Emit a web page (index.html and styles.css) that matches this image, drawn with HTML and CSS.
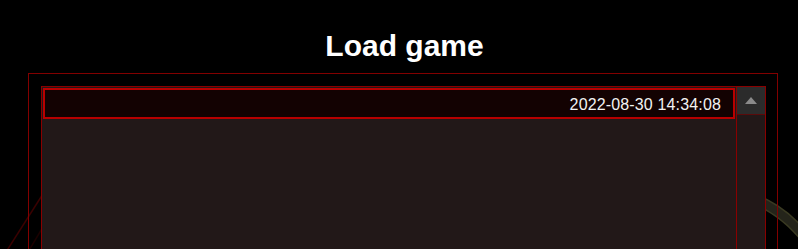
FILE: index.html
```html
<!DOCTYPE html>
<html lang="en">
<head>
<meta charset="utf-8">
<title>Load game</title>
<link rel="stylesheet" href="styles.css">
</head>
<body>
<svg class="backdrop" width="798" height="249" viewBox="0 0 798 249" aria-hidden="true">
  <line x1="6" y1="252" x2="48" y2="186" stroke="#3a0000" stroke-width="1.5"/>
  <line x1="28" y1="252" x2="46" y2="222" stroke="#1c0000" stroke-width="1.5"/>
  <path d="M756 200 Q782 210 804 236" fill="none" stroke="#3a3a22" stroke-width="11"/>
  <path d="M756 200 Q782 210 804 236" fill="none" stroke="#24241a" stroke-width="8"/>
</svg>
<main class="page">
  <h1 class="title">Load game</h1>
  <section class="frame">
    <div class="listbox">
      <div class="list">
        <div class="row">2022-08-30 14:34:08</div>
      </div>
      <div class="scrollbar">
        <div class="scroll-up"><span class="arrow"></span></div>
      </div>
    </div>
  </section>
</main>
</body>
</html>
```

FILE: styles.css
```css
html, body {
  margin: 0;
  padding: 0;
  background: #000;
  height: 249px;
  overflow: hidden;
}

body {
  font-family: "Liberation Sans", Arial, sans-serif;
  color: #fff;
  position: relative;
}

.backdrop {
  position: absolute;
  left: 0;
  top: 0;
  z-index: 0;
}

.page {
  position: relative;
  z-index: 1;
  padding: 29px 0 0 28px;
  width: 750px;
}

.title {
  margin: 0 0 10px;
  padding-left: 3px;
  font-size: 30px;
  line-height: 34px;
  font-weight: bold;
  text-align: center;
  color: #fff;
}

.frame {
  border: 1px solid #820000;
  border-bottom: none;
  padding: 12px 11px 0 12px;
}

.listbox {
  display: flex;
  border: 1px solid #8a0000;
  border-bottom: none;
  background: #221818;
  height: 163px;
}

.list {
  flex: 1;
  padding: 1px 1px 0 1px;
}

.row {
  border: 2px solid #b80000;
  background: #130202;
  padding: 6px 12px 3px;
  line-height: 18px;
  font-size: 16px;
  text-align: right;
  color: #f2f2f2;
  letter-spacing: 0.15px;
}

.scrollbar {
  width: 28px;
  border-left: 1px solid #8a0000;
  background: #221818;
}

.scroll-up {
  height: 27px;
  background: #2b2b2b;
  border-bottom: 1px solid #5a0a0a;
  display: flex;
  align-items: center;
  justify-content: center;
}

.arrow {
  width: 0;
  height: 0;
  border-left: 6px solid transparent;
  border-right: 6px solid transparent;
  border-bottom: 7px solid #8a8a8a;
}
```
